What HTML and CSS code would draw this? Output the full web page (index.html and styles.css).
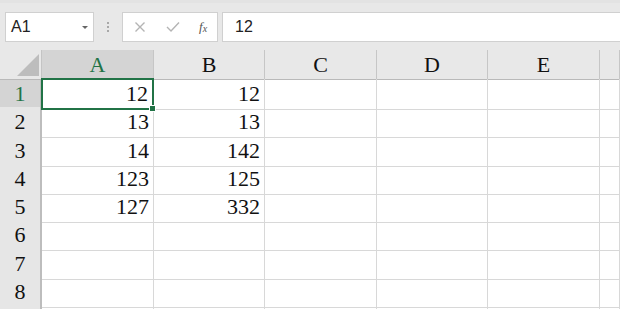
FILE: index.html
```html
<!DOCTYPE html>
<html lang="zh">
  <head>
    <meta charset="UTF-8" />
    <title>Sheet1</title>
    <link rel="stylesheet" href="styles.css">
  </head>
  <body>
    <!-- Barre de formule -->
    <div class="toolbar">
      <div class="name-box">
        <span>A1</span>
        <span class="caret"></span>
      </div>
      <div class="grip">
        <svg width="3" height="11" viewBox="0 0 3 11"><rect x="0" y="0" width="2" height="2"/><rect x="0" y="4" width="2" height="2"/><rect x="0" y="8" width="2" height="2"/></svg>
      </div>
      <div class="fx-box">
        <svg class="icon" width="12" height="12" viewBox="0 0 12 12"><path d="M1.5 1.5 L10.5 10.5 M10.5 1.5 L1.5 10.5" /></svg>
        <svg class="icon" width="14" height="12" viewBox="0 0 14 12"><path d="M1 6 L5 10 L13 1.5" /></svg>
        <span class="fx">f<sub>x</sub></span>
      </div>
      <div class="formula">12</div>
    </div>

    <!-- Feuille -->
    <div class="sheet">
      <div class="row head">
        <div class="corner"><span class="tri"></span></div>
        <div class="col sel">A</div>
        <div class="col">B</div>
        <div class="col">C</div>
        <div class="col">D</div>
        <div class="col">E</div>
        <div class="col"></div>
      </div>
      <div class="row">
        <div class="num sel">1</div>
        <div class="cell active">12</div>
        <div class="cell">12</div>
        <div class="cell"></div><div class="cell"></div><div class="cell"></div><div class="cell"></div>
      </div>
      <div class="row">
        <div class="num">2</div>
        <div class="cell">13</div>
        <div class="cell">13</div>
        <div class="cell"></div><div class="cell"></div><div class="cell"></div><div class="cell"></div>
      </div>
      <div class="row">
        <div class="num">3</div>
        <div class="cell">14</div>
        <div class="cell">142</div>
        <div class="cell"></div><div class="cell"></div><div class="cell"></div><div class="cell"></div>
      </div>
      <div class="row">
        <div class="num">4</div>
        <div class="cell">123</div>
        <div class="cell">125</div>
        <div class="cell"></div><div class="cell"></div><div class="cell"></div><div class="cell"></div>
      </div>
      <div class="row">
        <div class="num">5</div>
        <div class="cell">127</div>
        <div class="cell">332</div>
        <div class="cell"></div><div class="cell"></div><div class="cell"></div><div class="cell"></div>
      </div>
      <div class="row">
        <div class="num">6</div>
        <div class="cell"></div><div class="cell"></div><div class="cell"></div><div class="cell"></div><div class="cell"></div><div class="cell"></div>
      </div>
      <div class="row">
        <div class="num">7</div>
        <div class="cell"></div><div class="cell"></div><div class="cell"></div><div class="cell"></div><div class="cell"></div><div class="cell"></div>
      </div>
      <div class="row">
        <div class="num">8</div>
        <div class="cell"></div><div class="cell"></div><div class="cell"></div><div class="cell"></div><div class="cell"></div><div class="cell"></div>
      </div>
      <div class="row">
        <div class="num"></div>
        <div class="cell"></div><div class="cell"></div><div class="cell"></div><div class="cell"></div><div class="cell"></div><div class="cell"></div>
      </div>
    </div>
  </body>
</html>
```

FILE: styles.css
```css
body {
  margin: 0;
  background-color: #ffffff;
  overflow: hidden;
  font-family: "Liberation Serif", serif;
}

/* Barre de formule */
.toolbar {
  display: flex;
  height: 50px;
  box-sizing: border-box;
  padding: 12px 0 0 5px;
  background-color: #e8e8e8;
  border-top: 3px solid #e3e3e3;
  font-family: "Liberation Sans", Arial, sans-serif;
}

.name-box,
.fx-box,
.formula {
  height: 30px;
  box-sizing: border-box;
  background-color: #ffffff;
  border: 1px solid #d0d0d0;
  margin-top: -3px;
}

.name-box {
  width: 89px;
  display: flex;
  align-items: center;
  justify-content: space-between;
  padding: 0 5px 0 5px;
  font-size: 16px;
  color: #222222;
}

.caret {
  width: 0;
  height: 0;
  border-left: 3px solid transparent;
  border-right: 3px solid transparent;
  border-top: 3px solid #666666;
}

.grip {
  width: 28px;
  display: flex;
  align-items: center;
  justify-content: center;
  margin-top: -3px;
  height: 30px;
  fill: #a8a8a8;
}

.fx-box {
  width: 96px;
  display: flex;
  align-items: center;
  padding-left: 11px;
  gap: 20px;
}

.fx-box .icon {
  fill: none;
  stroke: #b4b4b4;
  stroke-width: 1.4;
}

.fx {
  font-family: "Liberation Serif", serif;
  font-style: italic;
  font-size: 13px;
  color: #555555;
  margin-left: -1px;
}

.fx sub {
  font-size: 10px;
  vertical-align: -1px;
}

.formula {
  flex: 1;
  margin-left: 4px;
  border-right: none;
  padding-left: 12px;
  font-size: 16px;
  line-height: 28px;
  color: #222222;
}

/* Feuille */
.row {
  display: grid;
  grid-template-columns: 42px 112px 111px 112px 111px 112px 1fr;
  height: 28.25px;
}

.row.head {
  height: 29px;
  background-color: #e8e8e8;
}

.row.head > div {
  border-bottom: 1px solid #b9b9b9;
}

.corner {
  position: relative;
  border-right: 1px solid #c4c4c4;
  box-sizing: border-box;
}

.tri {
  position: absolute;
  right: 2px;
  bottom: 3px;
  width: 0;
  height: 0;
  border-left: 22px solid transparent;
  border-bottom: 22px solid #bdbdbd;
}

.col {
  box-sizing: border-box;
  border-right: 1px solid #c6c6c6;
  text-align: center;
  font-size: 22px;
  line-height: 29px;
  color: #111111;
}

.col.sel {
  background-color: #d4d4d4;
  color: #217346;
}

.num {
  box-sizing: border-box;
  background-color: #e6e6e6;
  border-right: 2px solid #bdbdbd;
  border-bottom: 1px solid #d2d2d2;
  text-align: center;
  font-size: 22px;
  line-height: 30px;
  color: #111111;
}

.num.sel {
  background-color: #d4d4d4;
  color: #217346;
}

.cell {
  box-sizing: border-box;
  border-right: 1px solid #d8d8d8;
  border-bottom: 1px solid #d8d8d8;
  text-align: right;
  padding-right: 4px;
  font-size: 22px;
  line-height: 30px;
  color: #111111;
}

/* Cellule active */
.cell.active {
  position: relative;
  padding-right: 5px;
}

.cell.active::after {
  content: "";
  position: absolute;
  left: -1px;
  top: -1px;
  right: -1px;
  bottom: -1px;
  border: 2px solid #217346;
}

.cell.active::before {
  content: "";
  position: absolute;
  right: -3px;
  bottom: -3px;
  width: 5px;
  height: 5px;
  background-color: #217346;
  border: 1px solid #ffffff;
  z-index: 1;
}
```
